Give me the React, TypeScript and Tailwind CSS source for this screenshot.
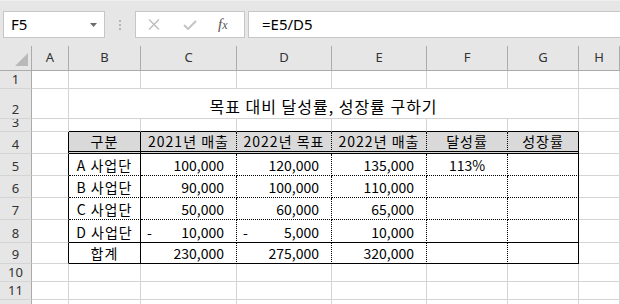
import type { ReactNode } from 'react';

const gR = 'border-r border-r-[#d4d4d4]';
const gB = 'border-b border-b-[#d4d4d4]';
const sR = 'border-r border-r-black';
const dR = 'border-r border-r-black [border-right-style:dotted]';
const sB = 'border-b border-b-black';
const dB = 'border-b border-b-black [border-bottom-style:dotted]';
const wB = 'border-b-[3px] border-b-black [border-bottom-style:double]';

const cellFont = "font-['Noto_Sans_CJK_KR',sans-serif] text-[14px] leading-[16px] text-black";
const hdrFont = "font-['Noto_Sans',sans-serif] text-[13px] text-[#333]";

type Row = {
  n: number;
  cells: { text?: ReactNode; cls: string }[];
};

const mid = 'justify-center tracking-[1px]';
const num = 'justify-end pr-[12px]';

const acct = (v: string) => (
  <span className="flex w-full justify-between pl-[6px] pr-[12px]">
    <span>-</span>
    <span>{v}</span>
  </span>
);

const tableRows: { a: ReactNode; c: ReactNode; d: ReactNode; e: ReactNode; f?: ReactNode; b: string }[] = [
  { a: 'A 사업단', c: '100,000', d: '120,000', e: '135,000', f: '113%', b: dB },
  { a: 'B 사업단', c: '90,000', d: '100,000', e: '110,000', b: dB },
  { a: 'C 사업단', c: '50,000', d: '60,000', e: '65,000', b: dB },
  { a: 'D 사업단', c: acct('10,000'), d: acct('5,000'), e: '10,000', b: sB },
  { a: '합계', c: '230,000', d: '275,000', e: '320,000', b: sB },
];

const blank = (n: number, bRow = gB): Row => ({
  n,
  cells: [
    { cls: `${gR} ${gB}` },
    { cls: `${gR} ${bRow}` },
    { cls: `${gR} ${bRow}` },
    { cls: `${gR} ${bRow}` },
    { cls: `${gR} ${bRow}` },
    { cls: `${gR} ${bRow}` },
    { cls: `${gR} ${bRow}` },
    { cls: `${gR} ${gB}` },
  ],
});

const rows: Row[] = [
  blank(1),
  {
    n: 2,
    cells: [
      { cls: `${gR} ${gB}` },
      {
        text: '목표 대비 달성률, 성장률 구하기',
        cls: `col-span-6 justify-center pb-[4px] text-[16px] tracking-[1px] ${gR} ${gB}`,
      },
      { cls: `${gR} ${gB}` },
    ],
  },
  blank(3, sB),
  {
    n: 4,
    cells: [
      { cls: `${sR} ${gB}` },
      { text: '구분', cls: `${mid} bg-[#d9d9d9] ${sR} ${wB}` },
      { text: '2021년 매출', cls: `${mid} bg-[#d9d9d9] ${dR} ${wB}` },
      { text: '2022년 목표', cls: `${mid} bg-[#d9d9d9] ${dR} ${wB}` },
      { text: '2022년 매출', cls: `${mid} bg-[#d9d9d9] ${dR} ${wB}` },
      { text: '달성률', cls: `${mid} bg-[#d9d9d9] ${dR} ${wB}` },
      { text: '성장률', cls: `${mid} bg-[#d9d9d9] ${sR} ${wB}` },
      { cls: `${gR} ${gB}` },
    ],
  },
  ...tableRows.map((r, i) => ({
    n: 5 + i,
    cells: [
      { cls: `${sR} ${gB}` },
      { text: r.a, cls: `${mid} ${sR} ${r.b}` },
      { text: r.c, cls: `${typeof r.c === 'string' ? num : ''} ${dR} ${r.b}` },
      { text: r.d, cls: `${typeof r.d === 'string' ? num : ''} ${dR} ${r.b}` },
      { text: r.e, cls: `${num} ${dR} ${r.b}` },
      { text: r.f, cls: `justify-center ${dR} ${r.b}` },
      { cls: `${sR} ${r.b}` },
      { cls: `${gR} ${gB}` },
    ],
  })),
  blank(10),
  blank(11),
  blank(12),
];

const letters = ['A', 'B', 'C', 'D', 'E', 'F', 'G', 'H'];

const FormulaBar = () => (
  <div className="flex h-[46px] items-start border-t border-t-[#efefef] pt-[10px]">
    <div className="ml-[3px] flex h-[27px] w-[102px] items-center justify-between border border-[#c6c6c6] bg-white pl-[7px] pr-[7px]">
      <span className="font-['Noto_Sans',sans-serif] text-[15px] text-black">F5</span>
      <svg width="7" height="4" viewBox="0 0 7 4">
        <polygon points="0,0 7,0 3.5,4" fill="#6b6b6b" />
      </svg>
    </div>
    <div className="ml-[14px] mt-[9px] flex flex-col gap-[2px]">
      <span className="h-[2px] w-[2px] bg-[#b4b4b4]" />
      <span className="h-[2px] w-[2px] bg-[#b4b4b4]" />
      <span className="h-[2px] w-[2px] bg-[#b4b4b4]" />
    </div>
    <div className="ml-[14px] flex h-[27px] w-[110px] items-center border border-[#c6c6c6] bg-white">
      <svg className="ml-[12px]" width="12" height="11" viewBox="0 0 12 11">
        <path d="M1 0.5 L11 10.5 M11 0.5 L1 10.5" stroke="#bdbdbd" strokeWidth="1.4" fill="none" />
      </svg>
      <svg className="ml-[23px]" width="14" height="10" viewBox="0 0 14 10">
        <path d="M1 5 L5 9 L13 1" stroke="#c4c4c4" strokeWidth="2" fill="none" />
      </svg>
      <span className="ml-[21px] font-['Liberation_Serif',serif] text-[15px] italic leading-none text-[#555]">
        f<span className="text-[12px]">x</span>
      </span>
    </div>
    <div className="ml-[3px] flex h-[27px] flex-1 items-center border border-r-0 border-[#c6c6c6] bg-white pl-[13px]">
      <span className="font-['Noto_Sans',sans-serif] text-[15px] text-black">=E5/D5</span>
    </div>
  </div>
);

export default function App() {
  return (
    <div className="h-[304px] w-[620px] overflow-hidden bg-[#e6e6e6]">
      <FormulaBar />
      <div className="grid grid-cols-[32px_37px_72px_96px_95px_95px_81px_71px_1fr] grid-rows-[25px_18px_30px_13px_22px_22px_22px_22px_23px_21px_18px_18px_18px] bg-white">
        <div className="relative border-b border-r border-[#ababab] bg-[#e6e6e6]">
          <svg className="absolute left-0 top-0" width="32" height="25" viewBox="0 0 32 25">
            <polygon points="28,7 28,20 15,20" fill="#b9b9b9" />
          </svg>
        </div>
        {letters.map((l) => (
          <div
            key={l}
            className={`flex items-center justify-center border-b border-r border-[#ababab] bg-[#e6e6e6] ${hdrFont}`}
          >
            {l}
          </div>
        ))}
        {rows.map((r) => [
          <div
            key={`h${r.n}`}
            className={`flex items-end justify-center overflow-hidden border-r border-r-[#ababab] border-b border-b-[#d4d4d4] bg-[#e6e6e6] pb-[2px] leading-[14px] ${hdrFont}`}
          >
            {r.n}
          </div>,
          ...r.cells.map((c, i) => (
            <div
              key={`${r.n}-${i}`}
              className={`flex items-end overflow-hidden whitespace-nowrap pb-[2px] ${cellFont} ${c.cls}`}
            >
              {c.text}
            </div>
          )),
        ])}
      </div>
    </div>
  );
}
